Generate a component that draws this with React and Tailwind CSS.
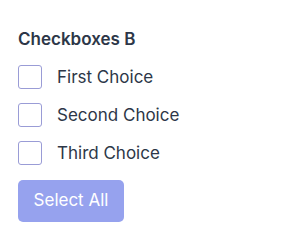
import React, { useState } from "react";

const choices = ["First Choice", "Second Choice", "Third Choice"];

const App = () => {
  const [checked, setChecked] = useState([false, false, false]);

  return (
    <div className="w-[300px] h-[240px] bg-white px-[18px] pt-[28px] font-['Inter',sans-serif] text-[#2d3748]">
      <h2 className="text-[17px] leading-[22px] font-semibold">Checkboxes B</h2>
      <div className="mt-[15px] flex flex-col gap-[14px]">
        {choices.map((c, i) => (
          <label key={c} className="flex items-center h-[24px] cursor-pointer">
            <input
              type="checkbox"
              checked={checked[i]}
              onChange={() => setChecked(checked.map((v, j) => (j === i ? !v : v)))}
              className="appearance-none w-[24px] h-[24px] rounded-[3px] border border-[#9a9cd6] bg-white"
            />
            <span className="ml-[15px] text-[17px] leading-[24px]">{c}</span>
          </label>
        ))}
      </div>
      <button
        onClick={() => setChecked([true, true, true])}
        className="mt-[15px] w-[106px] h-[42px] rounded-[5px] bg-[#96a2ee] text-white text-[17px]"
      >
        Select All
      </button>
    </div>
  );
};

export default App;
